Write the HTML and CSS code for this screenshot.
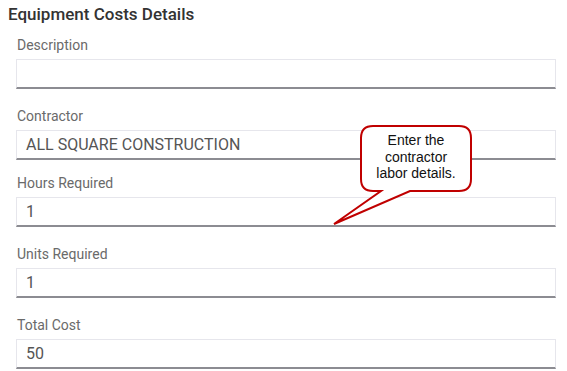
FILE: index.html
```html
<!DOCTYPE html>
<html>
<head>
<meta charset="utf-8">
<link rel="stylesheet" href="styles.css">
</head>
<body>
<div class="page">
  <h1 class="title">Equipment Costs Details</h1>
  <div class="fields">
    <div class="field">
      <label class="label">Description</label>
      <div class="input"></div>
    </div>
    <div class="field">
      <label class="label">Contractor</label>
      <div class="input">ALL SQUARE CONSTRUCTION</div>
    </div>
    <div class="field field-tight">
      <label class="label">Hours Required</label>
      <div class="input">1</div>
    </div>
    <div class="field">
      <label class="label">Units Required</label>
      <div class="input">1</div>
    </div>
    <div class="field">
      <label class="label">Total Cost</label>
      <div class="input">50</div>
    </div>
  </div>
  <svg class="callout-shape" width="567" height="371" viewBox="0 0 567 371">
    <path d="M373,126 H459 Q471,126 471,138 V179 Q471,191 459,191 H410 L334,224 L381,191 H373 Q361,191 361,179 V138 Q361,126 373,126 Z" fill="#ffffff" stroke="#c00000" stroke-width="2" stroke-linejoin="miter"/>
  </svg>
  <div class="callout-text">Enter the<br>contractor<br>labor details.</div>
</div>
</body>
</html>
```
FILE: styles.css
```css
html, body {
  margin: 0;
  padding: 0;
  background: #ffffff;
}
.page {
  position: relative;
  width: 567px;
  height: 371px;
  overflow: hidden;
  font-family: Roboto, "Liberation Sans", sans-serif;
}
.title {
  margin: 0;
  padding: 4px 0 0 8px;
  font-size: 17px;
  line-height: 20px;
  font-weight: 500;
  color: #333333;
}
.fields {
  display: flex;
  flex-direction: column;
  padding: 11px 11px 0 16px;
  gap: 17px;
}
.field {
  display: flex;
  flex-direction: column;
}
.field-tight {
  margin-top: -4px;
}
.label {
  font-size: 14px;
  line-height: 20px;
  color: #6a6a6a;
  padding-left: 1px;
  margin-bottom: 4px;
}
.input {
  box-sizing: border-box;
  height: 30px;
  border: 1px solid #e6e6ec;
  border-bottom: 2px solid #8c8c92;
  padding: 0 9px;
  font-size: 16px;
  line-height: 28px;
  color: #555555;
}
.callout-shape {
  position: absolute;
  left: 0;
  top: 0;
}
.callout-text {
  position: absolute;
  left: 361px;
  top: 132px;
  width: 110px;
  text-align: center;
  font-family: "Liberation Sans", Arial, sans-serif;
  font-size: 14px;
  line-height: 16.5px;
  color: #111111;
}
```
